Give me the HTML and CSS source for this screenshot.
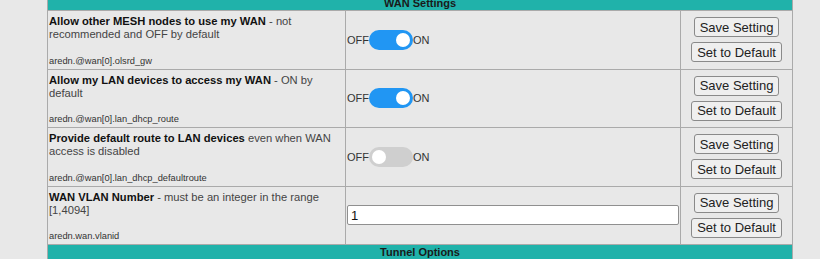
FILE: index.html
```html
<!DOCTYPE html>
<html>
<head>
  <link rel="stylesheet" href="styles.css">
</head>
<body>
  <table class="settings-table">
    <colgroup>
      <col class="col-label">
      <col class="col-value">
      <col class="col-actions">
    </colgroup>
    <tr>
      <th colspan="3" class="section-head">WAN Settings</th>
    </tr>

    <tr>
      <td class="setting-label">
        <div class="setting-desc"><b>Allow other MESH nodes to use my WAN</b> - not recommended and OFF by default</div>
        <div class="setting-key">aredn.@wan[0].olsrd_gw</div>
      </td>
      <td class="setting-value">
        <div class="toggle-row">
          <span>OFF</span>
          <span class="toggle toggle-on"><span class="toggle-knob"></span></span>
          <span>ON</span>
        </div>
      </td>
      <td class="setting-actions">
        <div class="action-stack">
          <button class="action-button">Save Setting</button>
          <button class="action-button">Set to Default</button>
        </div>
      </td>
    </tr>

    <tr>
      <td class="setting-label">
        <div class="setting-desc"><b>Allow my LAN devices to access my WAN</b> - ON by default</div>
        <div class="setting-key">aredn.@wan[0].lan_dhcp_route</div>
      </td>
      <td class="setting-value">
        <div class="toggle-row">
          <span>OFF</span>
          <span class="toggle toggle-on"><span class="toggle-knob"></span></span>
          <span>ON</span>
        </div>
      </td>
      <td class="setting-actions">
        <div class="action-stack">
          <button class="action-button">Save Setting</button>
          <button class="action-button">Set to Default</button>
        </div>
      </td>
    </tr>

    <tr>
      <td class="setting-label">
        <div class="setting-desc"><b>Provide default route to LAN devices</b> even when WAN access is disabled</div>
        <div class="setting-key">aredn.@wan[0].lan_dhcp_defaultroute</div>
      </td>
      <td class="setting-value">
        <div class="toggle-row">
          <span>OFF</span>
          <span class="toggle"><span class="toggle-knob"></span></span>
          <span>ON</span>
        </div>
      </td>
      <td class="setting-actions">
        <div class="action-stack">
          <button class="action-button">Save Setting</button>
          <button class="action-button">Set to Default</button>
        </div>
      </td>
    </tr>

    <tr>
      <td class="setting-label">
        <div class="setting-desc"><b>WAN VLAN Number</b> - must be an integer in the range [1,4094]</div>
        <div class="setting-key">aredn.wan.vlanid</div>
      </td>
      <td class="setting-value">
        <input type="text" class="setting-input" value="1">
      </td>
      <td class="setting-actions">
        <div class="action-stack">
          <button class="action-button">Save Setting</button>
          <button class="action-button">Set to Default</button>
        </div>
      </td>
    </tr>

    <tr>
      <th colspan="3" class="section-head">Tunnel Options</th>
    </tr>
  </table>
</body>
</html>
```

FILE: styles.css
```css
body {
  margin: 0;
  background-color: #e8e8e8;
  font-family: "Liberation Sans", Arial, sans-serif;
  font-size: 11px;
  color: #333;
}

.settings-table {
  margin: -5px 0 0 47px;
  width: 745px;
  table-layout: fixed;
  border-collapse: collapse;
}

.col-label {
  width: 298px;
}

.col-value {
  width: 335px;
}

.col-actions {
  width: 112px;
}

.settings-table td,
.settings-table th {
  border: 1px solid #aaa;
}

.section-head {
  padding: 1px;
  background-color: #20b2aa;
  color: #1a1a1a;
  font-size: 11px;
  font-weight: bold;
  text-align: center;
}

.setting-label {
  padding: 4px 1px 2px 1px;
  vertical-align: top;
}

.setting-desc {
  font-size: 11.2px;
  line-height: 13px;
  color: #444;
}

.setting-desc b {
  color: #111;
}

.setting-key {
  margin-top: 14.5px;
  font-size: 9.3px;
  line-height: 11px;
  color: #333;
}

.setting-value {
  padding: 0 1px;
  vertical-align: middle;
}

.toggle-row {
  display: flex;
  align-items: center;
  color: #333;
}

.toggle {
  position: relative;
  display: inline-block;
  width: 44px;
  height: 20px;
  border-radius: 10px;
  background-color: #cfcfcf;
}

.toggle-knob {
  position: absolute;
  top: 3px;
  left: 3px;
  width: 14px;
  height: 14px;
  border-radius: 50%;
  background-color: #fff;
}

.toggle-on {
  background-color: #2196f3;
}

.toggle-on .toggle-knob {
  left: 27px;
}

.setting-input {
  display: block;
  box-sizing: border-box;
  width: 100%;
  height: 20px;
  margin: 0;
  padding: 1px 3px;
  border: 1px solid #8f8f8f;
  border-radius: 2px;
  background-color: #fff;
  font-family: "Liberation Sans", Arial, sans-serif;
  font-size: 13px;
  color: #111;
}

.setting-actions {
  padding: 0;
  vertical-align: middle;
}

.action-stack {
  display: flex;
  flex-direction: column;
  align-items: center;
  gap: 5px;
}

.action-button {
  height: 20px;
  padding: 0 5px;
  border: 1px solid #8a8a8a;
  border-radius: 3px;
  background-color: #efefef;
  font-family: "Liberation Sans", Arial, sans-serif;
  font-size: 13px;
  color: #222;
  cursor: pointer;
}
```
